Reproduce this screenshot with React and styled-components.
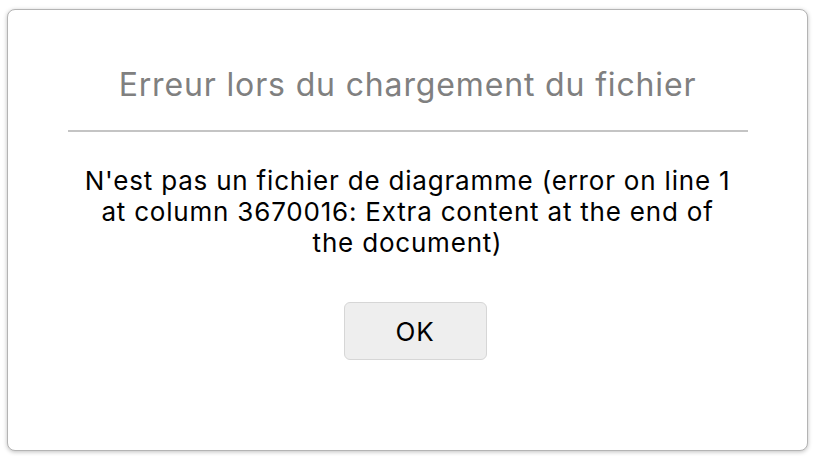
import styled, { createGlobalStyle } from "styled-components";

const GlobalStyle = createGlobalStyle`
  html, body {
    margin: 0;
    padding: 0;
    background: #ffffff;
  }
  body {
    font-family: Inter, "Liberation Sans", Arial, sans-serif;
  }
`;

const Page = styled.div`
  width: 816px;
  height: 456px;
  box-sizing: border-box;
  padding: 9px 8px 5px 7px;
`;

const Dialog = styled.div`
  box-sizing: border-box;
  height: 442px;
  border: 1px solid #b4b4b4;
  border-radius: 8px;
  box-shadow: 0 1px 4px rgba(0, 0, 0, 0.25);
  background: #fff;
  display: flex;
  flex-direction: column;
  align-items: center;
  padding-top: 56px;
`;

const Title = styled.h1`
  margin: 0;
  font-size: 32px;
  line-height: 37px;
  font-weight: 400;
  letter-spacing: 0.85px;
  color: #808080;
  text-align: center;
`;

const Divider = styled.hr`
  width: 680px;
  border: none;
  border-top: 2px solid #c4c4c4;
  margin: 27px 0 33px;
`;

const Message = styled.p`
  margin: 0;
  max-width: 648px;
  font-size: 26px;
  line-height: 31px;
  letter-spacing: 0.8px;
  color: #000;
  text-align: center;
`;

const Button = styled.button`
  margin: 44px 0 0 15px;
  width: 143px;
  height: 58px;
  border: 1px solid #d6d6d6;
  border-radius: 6px;
  background: #eeeeee;
  font-family: inherit;
  font-size: 26px;
  letter-spacing: 0.8px;
  color: #000;
  cursor: pointer;
`;

function App() {
  return (
    <>
      <GlobalStyle />
      <Page>
        <Dialog>
          <Title>Erreur lors du chargement du fichier</Title>
          <Divider />
          <Message>
            N'est pas un fichier de diagramme (error on line 1 at column 3670016: Extra content at the end of the document)
          </Message>
          <Button>OK</Button>
        </Dialog>
      </Page>
    </>
  );
}

export default App;
